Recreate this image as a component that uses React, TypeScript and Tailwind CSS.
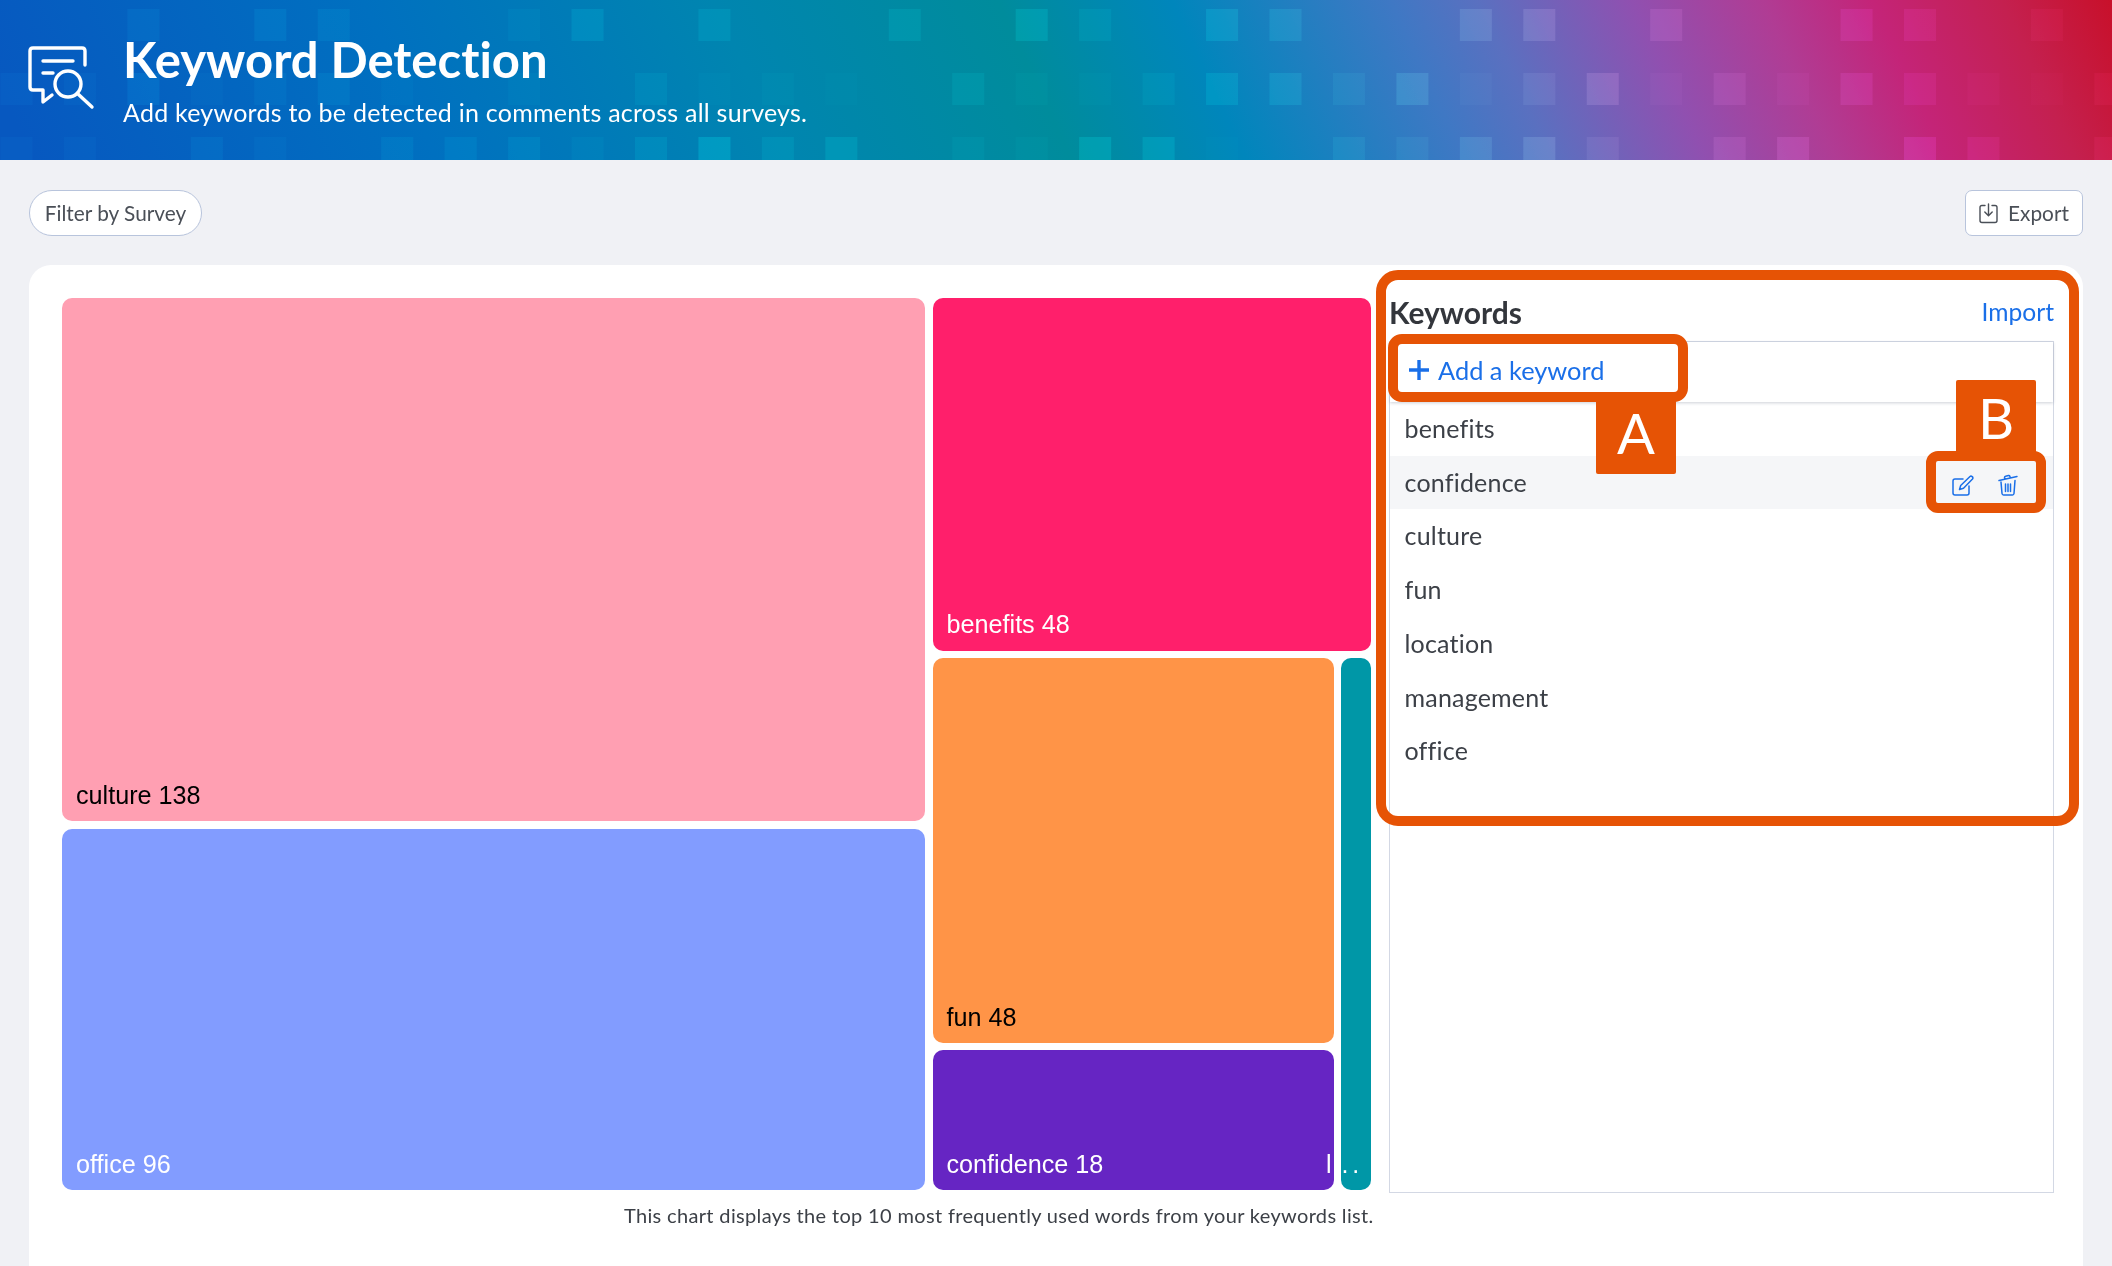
const sans = "font-['Lato','Open_Sans',sans-serif]";

// tile rows in the header pattern: [column, opacity]
const tileRows: { y: number; tiles: [number, number][] }[] = [
  {
    y: 9,
    tiles: [[2, 0.18], [4, 0.2], [5, 0.18], [8, 0.1], [9, 0.24], [11, 0.2], [14, 0.2], [16, 0.3], [17, 0.16], [19, 0.3], [20, 0.26], [23, 0.3], [24, 0.32], [26, 0.26], [29, 0.3], [30, 0.3], [32, 0.22]],
  },
  {
    y: 73,
    tiles: [[0, 0.14], [1, 0.1], [2, 0.26], [3, 0.07], [4, 0.14], [5, 0.18], [6, 0.06], [8, 0.08], [10, 0.14], [11, 0.05], [12, 0.06], [13, 0.04], [15, 0.18], [16, 0.06], [17, 0.05], [18, 0.14], [19, 0.26], [20, 0.26], [21, 0.14], [22, 0.32], [23, 0.07], [24, 0.18], [25, 0.32], [26, 0.07], [27, 0.22], [28, 0.1], [29, 0.3], [30, 0.24], [31, 0.1], [32, 0.07], [33, 0.26]],
  },
  {
    y: 137,
    tiles: [[0, 0.1], [1, 0.1], [3, 0.18], [4, 0.1], [6, 0.18], [7, 0.18], [8, 0.18], [9, 0.1], [10, 0.2], [11, 0.4], [12, 0.18], [13, 0.26], [15, 0.1], [16, 0.07], [17, 0.34], [18, 0.3], [19, 0.04], [21, 0.18], [22, 0.14], [23, 0.28], [24, 0.34], [25, 0.18], [27, 0.24], [28, 0.34], [30, 0.4], [31, 0.28], [33, 0.28]],
  },
];

const keywords = ["benefits", "confidence", "culture", "fun", "location", "management", "office"];

const HeaderTiles = () => (
  <svg className="absolute inset-0 mix-blend-overlay" width="2112" height="160" viewBox="0 0 2112 160">
    {tileRows.map((row) =>
      row.tiles.map(([col, op]) => (
        <rect key={`${row.y}-${col}`} x={0.5 + col * 63.45} y={row.y} width="32" height="32" fill="#fff" opacity={op * 0.5} />
      ))
    )}
  </svg>
);

const DetectIcon = () => (
  <svg className="absolute left-[28px] top-[46px]" width="68" height="64" viewBox="28 46 68 64" fill="none" stroke="#fff" strokeWidth="3.4" strokeLinecap="round" strokeLinejoin="round">
    <path d="M85 65V51q0-3-3-3H33q-3 0-3 3v36q0 3 3 3h10v12l9-7" />
    <path d="M43 61h30M43 73h10" />
    <circle cx="68" cy="84" r="13" />
    <path d="M78 94l14 13" />
  </svg>
);

const ExportIcon = () => (
  <svg width="19" height="21" viewBox="0 0 19 21" fill="none" stroke="#4a4f57" strokeWidth="1.4" strokeLinecap="round" strokeLinejoin="round">
    <path d="M6 2.5H3q-2 0-2 2v13q0 2 2 2h13q2 0 2-2v-13q0-2-2-2h-3" />
    <path d="M9.5 1v11.5M5.8 9l3.7 3.8L13.2 9" />
  </svg>
);

const EditIcon = () => (
  <svg width="23" height="21" viewBox="0 0 23 21" fill="none" stroke="#1a6fe8" strokeWidth="1.5" strokeLinecap="round" strokeLinejoin="round">
    <path d="M11 4H3q-2 0-2 2v12q0 2 2 2h12q2 0 2-2v-7" />
    <path d="M7.5 14.5l1.2-4L18 1.5q1-.8 2.2.2t.3 2.3l-9 9.2z" />
  </svg>
);

const TrashIcon = () => (
  <svg width="20" height="22" viewBox="0 0 20 22" fill="none" stroke="#1a6fe8" strokeWidth="1.5" strokeLinecap="round" strokeLinejoin="round">
    <path d="M1 6.5L19 2.5M7 5l-.5-1.5q0-1 1-1.2l3-.7q1-.2 1.4.8l.3 1" />
    <path d="M3 8l1 11.5q.2 1.5 1.5 1.5h9q1.3 0 1.5-1.5L17 6.5" />
    <path d="M7.5 10v7.5M10 10v7.5M12.5 10v7.5" />
  </svg>
);

const Box = ({ className, label }: { className: string; label: string }) => (
  <div className={`flex items-end rounded-[10px] px-[14px] pb-[11px] font-['Liberation_Sans',sans-serif] text-[25.2px] leading-[30px] ${className}`}>
    {label}
  </div>
);

export default function App() {
  return (
    <div className={`relative h-[1266px] w-[2112px] overflow-hidden bg-[#f0f1f5] text-[#3c4047] [font-variant-ligatures:none] ${sans}`}>
      <header className="relative h-[160px] bg-[linear-gradient(65deg,#0758c0_1.5%,#0070c0_20%,#0085b0_36%,#008c9c_49%,#0086bc_57%,#3f78c4_67%,#5a70c0_71%,#9050b0_78%,#b03c94_84%,#c42478_89%,#c4204f_95%,#c8102a_100%)]">
        <HeaderTiles />
        <DetectIcon />
        <div className="relative pl-[123px] text-white">
          <h1 className="pt-[28px] text-[49px] font-bold leading-[62px]">Keyword Detection</h1>
          <p className="mt-[7px] text-[25px] leading-[30px] tracking-[0.24px]">Add keywords to be detected in comments across all surveys.</p>
        </div>
      </header>

      <div className="flex items-center justify-between pl-[29px] pr-[29px] pt-[30px]">
        <button className="h-[46px] w-[173px] rounded-full border border-[#b8c4dc] bg-white text-[20.8px] text-[#4a4f57]">Filter by Survey</button>
        <button className="flex h-[46px] w-[118px] items-center justify-center gap-[10px] rounded-[7px] border border-[#b8c4dc] bg-white text-[20.8px] text-[#4a4f57]">
          <ExportIcon />
          Export
        </button>
      </div>

      <main className="ml-[29px] mr-[29px] mt-[29px] flex h-[1100px] gap-[18px] rounded-t-[22px] bg-white pl-[33px] pt-[33px]">
        <section className="w-[1309px]">
          <div className="flex h-[892px] gap-[7.5px]">
            <div className="flex w-[863px] flex-col gap-[8px]">
              <Box className="h-[523px] bg-[#ff9fb2] text-black" label="culture 138" />
              <Box className="h-[361px] bg-[#829cff] text-white" label="office 96" />
            </div>
            <div className="flex w-[438.5px] flex-col gap-[7px]">
              <Box className="h-[353px] bg-[#ff1f6b] pb-[12px]! text-white" label="benefits 48" />
              <div className="flex h-[532px] gap-[7px]">
                <div className="flex w-[401.5px] flex-col gap-[7px]">
                  <Box className="h-[385px] bg-[#ff9447] text-black" label="fun 48" />
                  <Box className="h-[140px] bg-[#6625c3] text-white" label="confidence 18" />
                </div>
                <div className="relative w-[30px] rounded-[10px] bg-[#0097a7]">
                  <span className="absolute bottom-[11px] left-[-15px] whitespace-nowrap font-['Liberation_Sans',sans-serif] text-[25px] leading-[30px] tracking-[3.7px] text-white">
                    <span className="tracking-[10px]">l</span>..
                  </span>
                </div>
              </div>
            </div>
          </div>
          <p className="ml-[562px] mt-[13px] whitespace-nowrap text-[20px] leading-[24px] tracking-[0.34px]">This chart displays the top 10 most frequently used words from your keywords list.</p>
        </section>

        <section className="relative w-[665px]">
          <div className="flex h-[43px] items-start justify-between">
            <h2 className="mt-[-1px] text-[30px] font-bold leading-[30px] text-[#33363c]">Keywords</h2>
            <a className="mt-[-1px] text-[24.6px] leading-[30px] text-[#1a6fe8]">Import</a>
          </div>
          <div className="h-[852px] border border-[#d3d8e4]">
            <div className="flex h-[60px] items-center gap-[9px] pb-[4px] pl-[19px] text-[25.4px] text-[#1a6fe8] shadow-[0_1px_3px_rgba(60,70,100,0.25)]">
              <svg width="20" height="20" viewBox="0 0 20 20" stroke="#1a6fe8" strokeWidth="3.4">
                <path d="M10 0v20M0 10h20" />
              </svg>
              Add a keyword
            </div>
            {keywords.map((word) => (
              <div key={word} className={`flex h-[53.7px] items-center justify-between pl-[14.5px] pr-[35px] text-[25px] tracking-[0.2px] ${word === "confidence" ? "bg-[#f5f6f8]" : ""}`}>
                {word}
                {word === "confidence" && (
                  <span className="flex items-center gap-[23px] pt-[5px]">
                    <EditIcon />
                    <TrashIcon />
                  </span>
                )}
              </div>
            ))}
          </div>

          {/* orange call-outs */}
          <div className="absolute left-[-13px] top-[-28px] h-[556px] w-[703px] rounded-[22px] border-[10px] border-[#e65305]" />
          <div className="absolute left-[-1px] top-[36px] h-[68px] w-[300px] rounded-[14px] border-[10px] border-[#e65305]" />
          <div className="absolute left-[207px] top-[102px] flex h-[74px] w-[80px] items-center justify-center rounded-b-[2px] bg-[#e65305] pb-[8px] text-[56px] leading-none text-white">A</div>
          <div className="absolute left-[567px] top-[82px] flex h-[72px] w-[80px] items-center justify-center rounded-t-[2px] bg-[#e65305] pt-[4px] text-[56px] leading-none text-white">B</div>
          <div className="absolute left-[537px] top-[153px] h-[62px] w-[120px] rounded-[12px] border-[10px] border-[#e65305]" />
        </section>
      </main>
    </div>
  );
}
